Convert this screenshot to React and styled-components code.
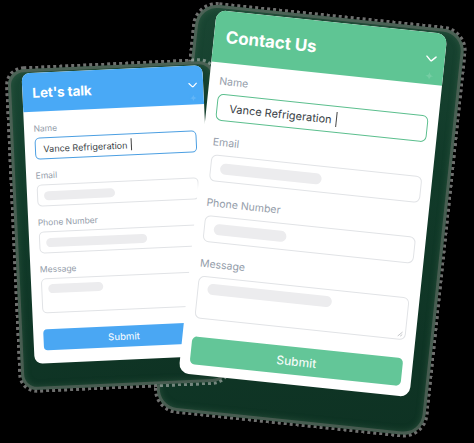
import React from 'react';
import styled, { createGlobalStyle } from 'styled-components';

const Global = createGlobalStyle`
  html, body { margin: 0; padding: 0; background: #000; }
  body { font-family: Inter, "Noto Sans", "Liberation Sans", sans-serif; }
  * { box-sizing: border-box; }
`;

const LEFT = {
  title: "Let's talk",
  accent: '#49a9f6', focus: '#4c9fe2', btn: '#4aa7f3',
  w: 181, h: 291, x: 27.5, y: 68.8, rot: -2.6,
  radius: 8, header: 39, headPad: 10, titleSize: 13.5, chev: 9, chevPad: 6,
  pad: 9.5, padTop: 12, padBottom: 13,
  label: 8.5, labelH: 10, labelGap: 4, inputH: 22, inputR: 5, text: 9, textPad: 8, barPad: 6,
  groupGap: 11, areaH: 35, btnGap: 16, btnH: 21, btnFont: 9.5, btnR: 4,
  bars: [71, 101, 55], barH: 9,
  sh: { t: -4, r: -12, b: -26, l: -14 }, shR: 16,
};

const RIGHT = {
  title: 'Contact Us',
  accent: '#5fc594', focus: '#5cbf8e', btn: '#63c698',
  w: 232, h: 365, x: 197.3, y: 21.1, rot: 6,
  radius: 10, header: 52, headPad: 12, titleSize: 17, chev: 11, chevPad: 8,
  pad: 10, padTop: 12, padBottom: 11,
  label: 10.5, labelH: 14, labelGap: 5, inputH: 27, inputR: 6, text: 11, textPad: 12, barPad: 9,
  groupGap: 15, areaH: 43, btnGap: 18, btnH: 28, btnFont: 12, btnR: 5,
  bars: [102, 73, 125], barH: 11,
  sh: { t: -5, r: -18, b: -38, l: -20 }, shR: 22,
};

const Canvas = styled.div`
  position: relative;
  width: 474px;
  height: 443px;
  background: #000;
  overflow: hidden;
`;

const Placed = styled.div`
  position: absolute;
  left: ${p => p.$z.x}px;
  top: ${p => p.$z.y}px;
  width: ${p => p.$z.w}px;
  height: ${p => p.$z.h}px;
  transform: rotate(${p => p.$z.rot}deg);
`;

const Shadow = styled(Placed)`
  &::before,
  &::after {
    content: '';
    position: absolute;
    top: ${p => p.$z.sh.t}px;
    right: ${p => p.$z.sh.r}px;
    bottom: ${p => p.$z.sh.b}px;
    left: ${p => p.$z.sh.l}px;
    border-radius: ${p => p.$z.shR}px;
  }
  &::before {
    background: linear-gradient(165deg, #1a4633 0%, #113a29 45%, #0e3223 100%);
    box-shadow: inset 0 0 7px 2px rgba(70, 110, 85, 0.6);
  }
  &::after {
    top: ${p => p.$z.sh.t - 3}px;
    right: ${p => p.$z.sh.r - 3}px;
    bottom: ${p => p.$z.sh.b - 3}px;
    left: ${p => p.$z.sh.l - 3}px;
    border: 3px dotted rgba(200, 202, 200, 0.55);
    box-shadow: inset 0 0 0 3px rgba(105, 112, 106, 0.55);
    border-radius: ${p => p.$z.shR + 3}px;
  }
`;

const Card = styled(Placed)`
  display: flex;
  flex-direction: column;
  background: #fff;
  border-radius: ${p => p.$z.radius}px;
  overflow: hidden;
`;

const Header = styled.div`
  position: relative;
  flex: 0 0 ${p => p.$z.header}px;
  display: flex;
  align-items: center;
  justify-content: space-between;
  padding: 0 ${p => p.$z.chevPad}px 0 ${p => p.$z.headPad}px;
  background: ${p => p.$z.accent};
`;

const Title = styled.div`
  color: #fff;
  font-weight: 700;
  font-size: ${p => p.$z.titleSize}px;
  letter-spacing: -0.1px;
`;

const Sparkle = styled.svg`
  position: absolute;
  right: ${p => p.$z.chevPad + 1}px;
  bottom: ${p => p.$z.header * 0.08}px;
  width: ${p => p.$z.chev * 0.8}px;
  height: ${p => p.$z.chev * 0.8}px;
  opacity: 0.14;
`;

const Body = styled.div`
  flex: 1;
  display: flex;
  flex-direction: column;
  gap: ${p => p.$z.groupGap}px;
  padding: ${p => p.$z.padTop}px ${p => p.$z.pad}px ${p => p.$z.padBottom}px;
`;

const Field = styled.div`
  display: flex;
  flex-direction: column;
  gap: ${p => p.$z.labelGap}px;
`;

const Label = styled.div`
  height: ${p => p.$z.labelH}px;
  line-height: ${p => p.$z.labelH}px;
  font-size: ${p => p.$z.label}px;
  color: #949daa;
`;

const Input = styled.div`
  position: relative;
  height: ${p => (p.$area ? p.$z.areaH : p.$z.inputH)}px;
  display: flex;
  align-items: ${p => (p.$area ? 'flex-start' : 'center')};
  padding: ${p => (p.$area ? p.$z.barH * 0.5 : 0)}px ${p => (p.$focus ? p.$z.textPad : p.$z.barPad)}px 0;
  border: ${p => (p.$focus ? `1.5px solid ${p.$z.focus}` : '1px solid #e1e3e6')};
  border-radius: ${p => p.$z.inputR}px;
  background: #fff;
`;

const Value = styled.span`
  font-size: ${p => p.$z.text}px;
  color: #3a3f47;
  white-space: nowrap;
`;

const Caret = styled.span`
  display: inline-block;
  width: 1px;
  height: ${p => p.$z.text * 1.3}px;
  margin-left: ${p => p.$z.text * 0.4}px;
  background: #444;
`;

const Bar = styled.div`
  width: ${p => p.$w}px;
  height: ${p => p.$z.barH}px;
  border-radius: ${p => p.$z.barH / 2}px;
  background: #ececee;
`;

const Grip = styled.svg`
  position: absolute;
  right: 2px;
  bottom: 2px;
  width: 6px;
  height: 6px;
`;

const Button = styled.div`
  margin-top: ${p => p.$z.btnGap - p.$z.groupGap}px;
  height: ${p => p.$z.btnH}px;
  display: flex;
  align-items: center;
  justify-content: center;
  border-radius: ${p => p.$z.btnR}px;
  background: ${p => p.$z.btn};
  color: rgba(255, 255, 255, 0.92);
  font-size: ${p => p.$z.btnFont}px;
  font-weight: 500;
`;

function Chevron({ z }) {
  const s = z.chev;
  return (
    <svg width={s} height={s * 0.6} viewBox="0 0 12 7">
      <polyline points="1,1 6,6 11,1" fill="none" stroke="#fff" strokeWidth="1.6" strokeLinecap="round" strokeLinejoin="round" />
    </svg>
  );
}

function Form({ z }) {
  return (
    <Card $z={z}>
      <Header $z={z}>
        <Title $z={z}>{z.title}</Title>
        <Chevron z={z} />
        <Sparkle $z={z} viewBox="0 0 10 10">
          <path d="M5 0.5 C5.6 3.5 6.5 4.4 9.5 5 C6.5 5.6 5.6 6.5 5 9.5 C4.4 6.5 3.5 5.6 0.5 5 C3.5 4.4 4.4 3.5 5 0.5 Z" fill="#fff" />
        </Sparkle>
      </Header>
      <Body $z={z}>
        <Field $z={z}>
          <Label $z={z}>Name</Label>
          <Input $z={z} $focus>
            <Value $z={z}>Vance Refrigeration</Value>
            <Caret $z={z} />
          </Input>
        </Field>
        <Field $z={z}>
          <Label $z={z}>Email</Label>
          <Input $z={z}>
            <Bar $z={z} $w={z.bars[0]} />
          </Input>
        </Field>
        <Field $z={z}>
          <Label $z={z}>Phone Number</Label>
          <Input $z={z}>
            <Bar $z={z} $w={z.bars[1]} />
          </Input>
        </Field>
        <Field $z={z}>
          <Label $z={z}>Message</Label>
          <Input $z={z} $area>
            <Bar $z={z} $w={z.bars[2]} />
            <Grip viewBox="0 0 6 6">
              <path d="M5.5 1 L1 5.5 M5.5 3.5 L3.5 5.5" stroke="#b9bcc0" strokeWidth="0.8" />
            </Grip>
          </Input>
        </Field>
        <Button $z={z}>Submit</Button>
      </Body>
    </Card>
  );
}

export default function App() {
  return (
    <>
      <Global />
      <Canvas>
        <Shadow $z={RIGHT} />
        <Shadow $z={LEFT} />
        <Form z={LEFT} />
        <Form z={RIGHT} />
      </Canvas>
    </>
  );
}
